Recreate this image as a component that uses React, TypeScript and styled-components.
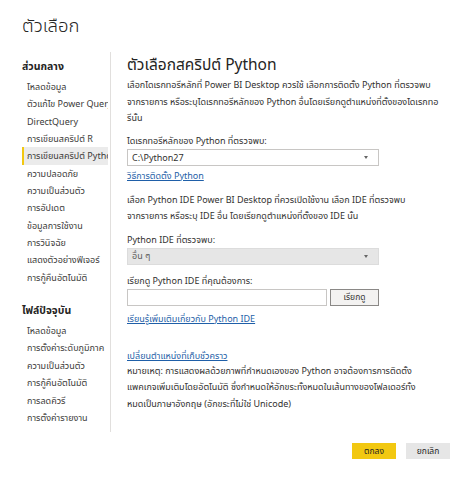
import React from "react";
import styled, { createGlobalStyle } from "styled-components";

const Global = createGlobalStyle`
  html, body { margin: 0; padding: 0; background: #ffffff; }
  body { font-family: "Segoe UI", "Noto Sans", "Noto Sans Thai", sans-serif; color: #323130; }
  * { box-sizing: border-box; }
`;

const Dialog = styled.div`
  width: 474px;
  height: 481px;
  display: flex;
  flex-direction: column;
  background: #fff;
  overflow: hidden;
`;

const Title = styled.h1`
  flex: none;
  margin: 0;
  padding: 11px 0 0 22px;
  height: 52px;
  font-size: 18.5px;
  font-weight: 300;
  line-height: 28px;
  color: #252423;
`;

const Body = styled.div`
  flex: none;
  display: flex;
  height: 380px;
`;

const Sidebar = styled.nav`
  width: 89px;
  margin-left: 22px;
  border-right: 1px solid #e1dfdd;
  display: flex;
  flex-direction: column;
  padding-top: 5px;
`;

const SideHeading = styled.div<{ $top?: number }>`
  font-size: 10.5px;
  font-weight: 700;
  line-height: 18px;
  color: #252423;
  margin-top: ${(p) => p.$top ?? 0}px;
  margin-bottom: 3px;
  white-space: nowrap;
`;

const SideItem = styled.div<{ $active?: boolean }>`
  width: 86px;
  height: 17.35px;
  line-height: 17.35px;
  font-size: 9px;
  padding-left: ${(p) => (p.$active ? 3 : 5)}px;
  border-left: ${(p) => (p.$active ? "2px solid #f2c811" : "none")};
  background: ${(p) => (p.$active ? "#ebebeb" : "transparent")};
  white-space: nowrap;
  overflow: hidden;
  color: #3b3a39;
`;

const Main = styled.main`
  flex: 1;
  padding: 3px 26px 0 16px;
  display: flex;
  flex-direction: column;
`;

const Heading = styled.h2`
  margin: 0;
  font-size: 15.5px;
  font-weight: 400;
  line-height: 18px;
  color: #252423;
`;

const Para = styled.p<{ $top: number }>`
  margin: ${(p) => p.$top}px 0 0;
  font-size: 9px;
  line-height: 16.5px;
  color: #323130;
`;

const Label = styled.div<{ $top: number }>`
  margin-top: ${(p) => p.$top}px;
  font-size: 9px;
  line-height: 14px;
  color: #323130;
`;

const Select = styled.div<{ $disabled?: boolean }>`
  width: 252px;
  height: 17px;
  margin-top: 1px;
  display: flex;
  align-items: center;
  justify-content: space-between;
  padding: 0 10px 0 4px;
  font-size: 9px;
  border: 1px solid ${(p) => (p.$disabled ? "#dcdcdc" : "#c8c6c4")};
  background: ${(p) => (p.$disabled ? "#e6e6e6" : "#fff")};
  color: ${(p) => (p.$disabled ? "#5c5c5c" : "#323130")};
`;

const Caret = styled.span`
  width: 0;
  height: 0;
  border-left: 2.5px solid transparent;
  border-right: 2.5px solid transparent;
  border-top: 3px solid #666;
`;

const Link = styled.a<{ $top: number }>`
  display: block;
  margin-top: ${(p) => p.$top}px;
  font-size: 9px;
  line-height: 16px;
  color: #1f5fa8;
  text-decoration: underline;
  cursor: pointer;
`;

const BrowseRow = styled.div`
  display: flex;
  gap: 3px;
  margin-top: 1px;
  height: 17px;
`;

const Input = styled.div`
  width: 200px;
  border: 1px solid #c8c6c4;
  background: #fff;
`;

const BrowseButton = styled.button`
  width: 49px;
  padding: 0;
  font-family: inherit;
  font-size: 8.5px;
  color: #323130;
  background: #f3f2f1;
  border: 1px solid #8a8886;
`;

const Footer = styled.div`
  flex: none;
  display: flex;
  justify-content: flex-end;
  gap: 10px;
  padding: 11px 24px 0 0;
`;

const Button = styled.button<{ $primary?: boolean }>`
  width: 44px;
  height: 16px;
  padding: 0;
  border: none;
  font-family: inherit;
  font-size: 8.5px;
  color: #252423;
  background: ${(p) => (p.$primary ? "#f2c811" : "#e6e6e6")};
`;

const general = [
  "โหลดข้อมูล",
  "ตัวแก้ไข Power Query",
  "DirectQuery",
  "การเขียนสคริปต์ R",
  "การเขียนสคริปต์ Python",
  "ความปลอดภัย",
  "ความเป็นส่วนตัว",
  "การอัปเดต",
  "ข้อมูลการใช้งาน",
  "การวินิจฉัย",
  "แสดงตัวอย่างฟีเจอร์",
  "การกู้คืนอัตโนมัติ",
];

const current = [
  "โหลดข้อมูล",
  "การตั้งค่าระดับภูมิภาค",
  "ความเป็นส่วนตัว",
  "การกู้คืนอัตโนมัติ",
  "การลดคิวรี",
  "การตั้งค่ารายงาน",
];

export default function App() {
  return (
    <>
      <Global />
      <Dialog>
        <Title>ตัวเลือก</Title>
        <Body>
          <Sidebar>
            <SideHeading>ส่วนกลาง</SideHeading>
            {general.map((g, i) => (
              <SideItem key={g} $active={i === 4}>
                {g}
              </SideItem>
            ))}
            <SideHeading $top={15}>ไฟล์ปัจจุบัน</SideHeading>
            {current.map((g) => (
              <SideItem key={g}>{g}</SideItem>
            ))}
          </Sidebar>
          <Main>
            <Heading>ตัวเลือกสคริปต์ Python</Heading>
            <Para $top={4}>
              เลือกไดเรกทอรีหลักที่ Power BI Desktop ควรใช้ เลือกการติดตั้ง Python ที่ตรวจพบ
              <br />
              จากรายการ หรือระบุไดเรกทอรีหลักของ Python อื่นโดยเรียกดูตำแหน่งที่ตั้งของไดเรกทอ
              <br />
              รีนั้น
            </Para>
            <Label $top={7}>ไดเรกทอรีหลักของ Python ที่ตรวจพบ:</Label>
            <Select>
              <span>C:\Python27</span>
              <Caret />
            </Select>
            <Link $top={2}>วิธีการติดตั้ง Python</Link>
            <Para $top={8}>
              เลือก Python IDE Power BI Desktop ที่ควรเปิดใช้งาน เลือก IDE ที่ตรวจพบ
              <br />
              จากรายการ หรือระบุ IDE อื่น โดยเรียกดูตำแหน่งที่ตั้งของ IDE นั้น
            </Para>
            <Label $top={8}>Python IDE ที่ตรวจพบ:</Label>
            <Select $disabled>
              <span>อื่น ๆ</span>
              <Caret />
            </Select>
            <Label $top={9}>เรียกดู Python IDE ที่คุณต้องการ:</Label>
            <BrowseRow>
              <Input />
              <BrowseButton>เรียกดู</BrowseButton>
            </BrowseRow>
            <Link $top={5}>เรียนรู้เพิ่มเติมเกี่ยวกับ Python IDE</Link>
            <Link $top={21}>เปลี่ยนตำแหน่งที่เก็บชั่วคราว</Link>
            <Para $top={-1}>
              หมายเหตุ: การแสดงผลด้วยภาพที่กำหนดเองของ Python อาจต้องการการติดตั้ง
              <br />
              แพคเกจเพิ่มเติมโดยอัตโนมัติ ซึ่งกำหนดให้อักขระทั้งหมดในเส้นทางของโฟลเดอร์ทั้ง
              <br />
              หมดเป็นภาษาอังกฤษ (อักขระที่ไม่ใช่ Unicode)
            </Para>
          </Main>
        </Body>
        <Footer>
          <Button $primary>ตกลง</Button>
          <Button>ยกเลิก</Button>
        </Footer>
      </Dialog>
    </>
  );
}
